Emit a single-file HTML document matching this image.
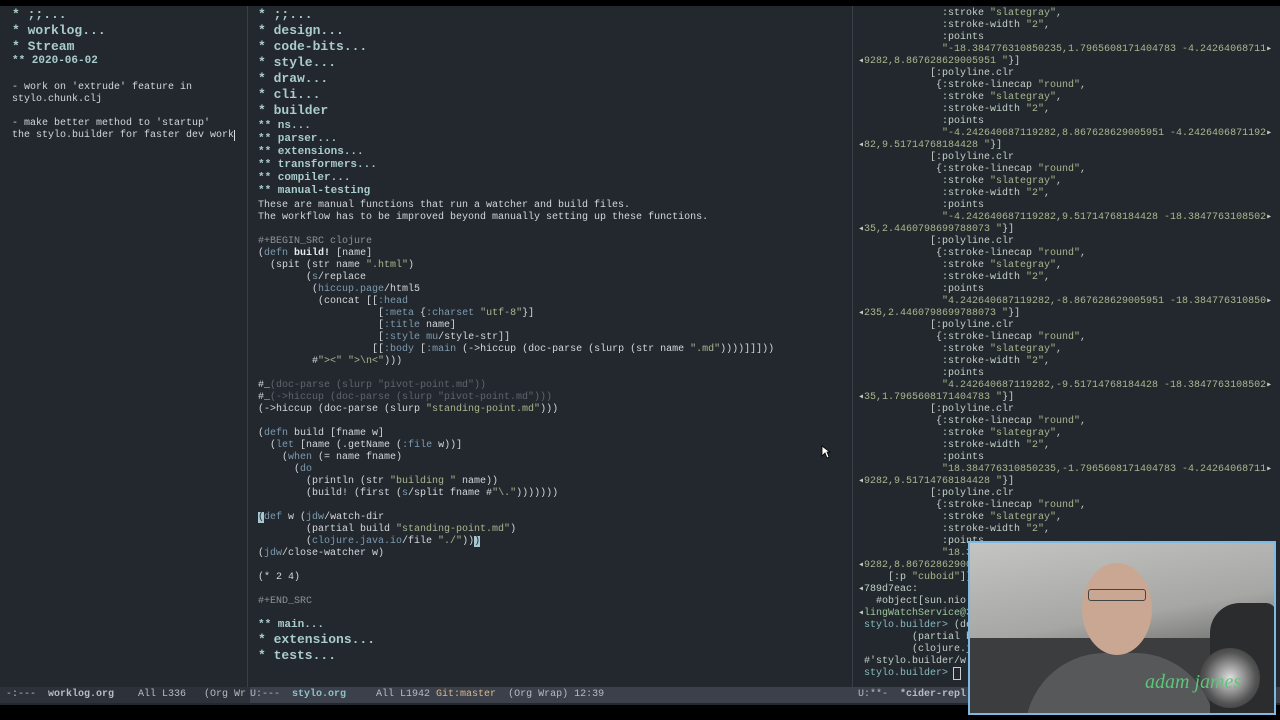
<!DOCTYPE html>
<html><head><meta charset="utf-8"><style>
*{margin:0;padding:0;box-sizing:border-box}
body{width:1280px;height:720px;background:#000;position:relative;overflow:hidden;font-family:"Liberation Mono","DejaVu Sans Mono",monospace;color:#d3d8dc}
.bg{position:absolute;left:0;top:6px;width:1280px;height:699px;background:#23272e}
pre{position:absolute;font-family:inherit;white-space:pre;font-size:10px;line-height:12px}
.h1{font-size:13px;line-height:16px;font-weight:bold;color:#a9cccc}
.h2{font-size:11px;line-height:13px;font-weight:bold;color:#a9cccc}
.k{color:#7c9cb0}.s{color:#a9b88e}.c{color:#5f656e}.w{color:#e6eaee}.m{color:#8d939a}
.vd{position:absolute;top:6px;width:1px;height:681px;background:#3a3f48}
.ml{position:absolute;top:687px;height:16px;font-size:10px;line-height:16px;white-space:pre;color:#b4bcc4}
.r{color:#c2d0c6}.p{color:#86bcbc}.g{color:#9cc89a}
</style></head><body>
<div class="bg"></div>
<div class="vd" style="left:247px"></div>
<div class="vd" style="left:852px"></div>

<!-- left pane -->
<pre class="h1" style="left:12px;top:7px">* ;;...
* worklog...
* Stream</pre>
<pre class="h2" style="left:12px;top:55px">** 2020-06-02</pre>
<pre style="left:12px;top:82px">- work on 'extrude' feature in
stylo.chunk.clj

- make better method to 'startup'
the stylo.builder for faster dev work<span style="border-left:1px solid #ddd"></span></pre>

<!-- middle pane -->
<pre class="h1" style="left:258px;top:7px">* ;;...
* design...
* code-bits...
* style...
* draw...
* cli...
* builder</pre>
<pre class="h2" style="left:258px;top:120px">** ns...
** parser...
** extensions...
** transformers...
** compiler...
** manual-testing</pre>
<pre style="left:258px;top:200px">These are manual functions that run a watcher and build files.
The workflow has to be improved beyond manually setting up these functions.

<span class="m">#+BEGIN_SRC clojure</span>
(<span class="k">defn</span> <span class="w" style="font-weight:bold">build!</span> [name]
  (spit (str name <span class="s">".html"</span>)
        (<span class="k">s</span>/replace
         (<span class="k">hiccup.page</span>/html5
          (concat [[<span class="k">:head</span>
                    [<span class="k">:meta</span> {<span class="k">:charset</span> <span class="s">"utf-8"</span>}]
                    [<span class="k">:title</span> name]
                    [<span class="k">:style</span> <span class="k">mu</span>/style-str]]
                   [[<span class="k">:body</span> [<span class="k">:main</span> (-&gt;hiccup (doc-parse (slurp (str name <span class="s">".md"</span>))))]]]))
         #<span class="s">"&gt;&lt;"</span> <span class="s">"&gt;\n&lt;"</span>)))

#_<span class="c">(doc-parse (slurp "pivot-point.md"))</span>
#_<span class="c">(-&gt;hiccup (doc-parse (slurp "pivot-point.md")))</span>
(-&gt;hiccup (doc-parse (slurp <span class="s">"standing-point.md"</span>)))

(<span class="k">defn</span> build [fname w]
  (<span class="k">let</span> [name (.getName (<span class="k">:file</span> w))]
    (<span class="k">when</span> (= name fname)
      (<span class="k">do</span>
        (println (str <span class="s">"building "</span> name))
        (build! (first (<span class="k">s</span>/split fname #<span class="s">"\."</span>)))))))

<span style="background:#a7c6cf;color:#23272e">(</span><span class="k">def</span> w (<span class="k">jdw</span>/watch-dir
        (partial build <span class="s">"standing-point.md"</span>)
        (<span class="k">clojure.java.io</span>/file <span class="s">"./"</span>))<span style="background:#a7c6cf;color:#23272e">)</span>
(<span class="k">jdw</span>/close-watcher w)

(* 2 4)

<span class="m">#+END_SRC</span></pre>
<pre class="h2" style="left:258px;top:619px">** main...</pre>
<pre class="h1" style="left:258px;top:632px">* extensions...
* tests...</pre>
<svg style="position:absolute;left:821px;top:445px" width="10" height="14"><path d="M1 1 L1 11 L4 8 L6 13 L8 12 L6 7 L9 7 Z" fill="#fff" stroke="#000" stroke-width="0.8"/></svg>

<!-- right pane -->
<pre class="r" style="left:858px;top:8px">              :stroke <span class="s">"slategray"</span>,
              :stroke-width <span class="s">"2"</span>,
              :points
              <span class="s">"-18.384776310850235,1.7965608171404783 -4.24264068711</span>▸
◂<span class="s">9282,8.867628629005951 "</span>}]
            [:polyline.clr
             {:stroke-linecap <span class="s">"round"</span>,
              :stroke <span class="s">"slategray"</span>,
              :stroke-width <span class="s">"2"</span>,
              :points
              <span class="s">"-4.242640687119282,8.867628629005951 -4.2426406871192</span>▸
◂<span class="s">82,9.51714768184428 "</span>}]
            [:polyline.clr
             {:stroke-linecap <span class="s">"round"</span>,
              :stroke <span class="s">"slategray"</span>,
              :stroke-width <span class="s">"2"</span>,
              :points
              <span class="s">"-4.242640687119282,9.51714768184428 -18.3847763108502</span>▸
◂<span class="s">35,2.4460798699788073 "</span>}]
            [:polyline.clr
             {:stroke-linecap <span class="s">"round"</span>,
              :stroke <span class="s">"slategray"</span>,
              :stroke-width <span class="s">"2"</span>,
              :points
              <span class="s">"4.242640687119282,-8.867628629005951 -18.384776310850</span>▸
◂<span class="s">235,2.4460798699788073 "</span>}]
            [:polyline.clr
             {:stroke-linecap <span class="s">"round"</span>,
              :stroke <span class="s">"slategray"</span>,
              :stroke-width <span class="s">"2"</span>,
              :points
              <span class="s">"4.242640687119282,-9.51714768184428 -18.3847763108502</span>▸
◂<span class="s">35,1.7965608171404783 "</span>}]
            [:polyline.clr
             {:stroke-linecap <span class="s">"round"</span>,
              :stroke <span class="s">"slategray"</span>,
              :stroke-width <span class="s">"2"</span>,
              :points
              <span class="s">"18.384776310850235,-1.7965608171404783 -4.24264068711</span>▸
◂<span class="s">9282,9.51714768184428 "</span>}]
            [:polyline.clr
             {:stroke-linecap <span class="s">"round"</span>,
              :stroke <span class="s">"slategray"</span>,
              :stroke-width <span class="s">"2"</span>,
              :points
              <span class="s">"18.384776310850235</span>
◂<span class="s">9282,8.867628629005951</span>
     [:p <span class="s">"cuboid"</span>]]
◂789d7eac:
   #object[sun.nio.
◂<span class="g">lingWatchService@3</span>
 <span class="p">stylo.builder&gt;</span> (def
         (partial b
         (clojure.j
 #'stylo.builder/w
 <span class="p">stylo.builder&gt;</span> <span style="outline:1px solid #ccc">&nbsp;</span></pre>

<!-- mode lines -->
<div class="ml" style="left:0;width:250px;background:#2d3139"> -:---  <b>worklog.org</b>    All L336   (Org Wr</div>
<div class="ml" style="left:250px;width:602px;background:#3b404b">U:---  <b style="color:#8fc1c8">stylo.org</b>     All L1942 <span style="color:#d7b98a">Git:master</span>  (Org Wrap) 12:39</div>
<div class="ml" style="left:852px;width:428px;background:#3b404b"> U:**-  <b>*cider-repl</b></div>

<!-- webcam -->
<div style="position:absolute;left:968px;top:541px;width:308px;height:174px;border:2px solid #7db9e2;overflow:hidden;background:linear-gradient(170deg,#c4c5c3 0%,#a6a7a5 45%,#6b6b6a 70%,#4a4a4a 100%)">
  <div style="position:absolute;left:0;top:95px;width:310px;height:90px;background:#3c3d3e"></div>
  <div style="position:absolute;left:55px;top:110px;width:190px;height:80px;border-radius:90px 90px 0 0;background:#56585a"></div>
  <div style="position:absolute;left:112px;top:20px;width:70px;height:92px;border-radius:50%;background:#c9a792"></div>
  <div style="position:absolute;left:118px;top:46px;width:58px;height:12px;border:1px solid #444;border-radius:3px"></div>
  <div style="position:absolute;left:240px;top:60px;width:66px;height:110px;border-radius:30px 10px 0 0;background:#2b2c2e"></div>
  <div style="position:absolute;left:230px;top:105px;width:60px;height:60px;border-radius:50%;background:radial-gradient(circle,#e0e0e0,#555 60%,#222)"></div>
  <div style="position:absolute;left:175px;top:128px;font-family:'Liberation Serif',serif;font-style:italic;font-size:20px;color:#5fc47a">adam james</div>
</div>
</body></html>
